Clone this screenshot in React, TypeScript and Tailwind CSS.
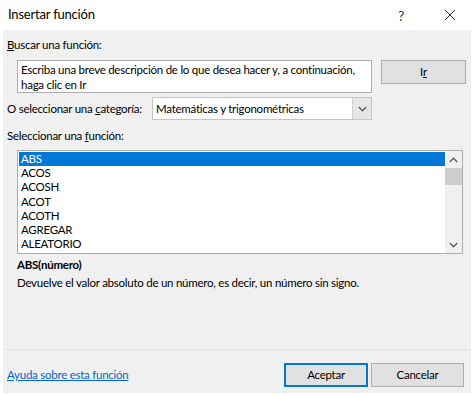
import React from "react";

const items = ["ABS", "ACOS", "ACOSH", "ACOT", "ACOTH", "AGREGAR", "ALEATORIO"];

function Chevron({ dir }: { dir: "up" | "down" }) {
  return (
    <svg width="9" height="6" viewBox="0 0 9 6" className="block">
      <path
        d={dir === "up" ? "M0.8 5 L4.5 1.3 L8.2 5" : "M0.8 1 L4.5 4.7 L8.2 1"}
        fill="none"
        stroke="#606060"
        strokeWidth="1.4"
      />
    </svg>
  );
}

export default function App() {
  return (
    <div
      className="w-[474px] h-[396px] bg-white flex flex-col text-[11.5px] tracking-[-0.25px] text-black"
      style={{ fontFamily: "Lato, 'Noto Sans', sans-serif" }}
    >
      <div className="h-[30px] flex items-center pl-[8px] shrink-0">
        <span className="text-[13px] tracking-[-0.2px]">Insertar función</span>
        <span className="ml-auto text-[14px] text-[#333] mr-[40px]">?</span>
        <svg width="12" height="12" viewBox="0 0 12 12" className="mr-[18px]">
          <path d="M1 1 L11 11 M11 1 L1 11" stroke="#333" strokeWidth="1" />
        </svg>
      </div>
      <div className="flex-1 mx-[3px] mb-[3px] bg-[#f0f0f0] flex flex-col">
        <div className="pl-[4px] pt-[8px] leading-[14px]">
          <u>B</u>uscar una función:
        </div>
        <div className="flex items-start mt-[8px] pl-[14px]">
          <div className="w-[355px] h-[33px] bg-white border border-[#adadad] px-[3px] pt-[1px] leading-[15px]">
            Escriba una breve descripción de lo que desea hacer y, a continuación, haga clic en Ir
          </div>
          <div className="ml-[9px] w-[85px] h-[24px] bg-[#e1e1e1] border border-[#adadad] flex items-center justify-center">
            <span>
              I<u>r</u>
            </span>
          </div>
        </div>
        <div className="flex items-center mt-[4px] pl-[4px]">
          <span className="w-[145px] whitespace-nowrap">
            O seleccionar una <u>c</u>ategoría:
          </span>
          <div className="w-[220px] h-[23px] bg-white border border-[#c4c4c4] flex items-center">
            <span className="pl-[3px] flex-1 whitespace-nowrap">Matemáticas y trigonométricas</span>
            <div className="w-[19px] h-full bg-[#e6e6e6] border-l border-[#d0d0d0] flex items-center justify-center">
              <Chevron dir="down" />
            </div>
          </div>
        </div>
        <div className="pl-[4px] mt-[9px] leading-[14px]">
          Seleccionar una <u>f</u>unción:
        </div>
        <div className="ml-[14px] mr-[8px] mt-[7px] h-[104px] bg-white border border-[#adadad] flex">
          <div className="flex-1 pl-[1px] pt-[1px]">
            {items.map((it, i) => (
              <div
                key={it}
                className={
                  "h-[14.2px] leading-[14.2px] pl-[2px] " +
                  (i === 0 ? "bg-[#0078d7] text-white" : "")
                }
              >
                {it}
              </div>
            ))}
          </div>
          <div className="w-[17px] bg-[#f0f0f0] flex flex-col items-center">
            <div className="h-[17px] flex items-center justify-center">
              <Chevron dir="up" />
            </div>
            <div className="w-[17px] h-[17px] bg-[#cdcdcd]" />
            <div className="flex-1" />
            <div className="h-[17px] flex items-center justify-center">
              <Chevron dir="down" />
            </div>
          </div>
        </div>
        <div className="pl-[14px] mt-[4px] leading-[14px] font-bold">ABS(número)</div>
        <div className="pl-[14px] mt-[4px] leading-[14px]">
          Devuelve el valor absoluto de un número, es decir, un número sin signo.
        </div>
        <div className="flex-1" />
        <div className="border-t border-[#e3e3e3] flex items-center pt-[13px] pb-[6px]">
          <a className="pl-[4px] text-[#0066cc] underline">Ayuda sobre esta función</a>
          <div className="ml-auto w-[84px] h-[24px] bg-[#e1e1e1] border-2 border-[#0078d7] flex items-center justify-center">
            Aceptar
          </div>
          <div className="ml-[3px] mr-[7px] w-[93px] h-[24px] bg-[#e1e1e1] border border-[#adadad] flex items-center justify-center">
            Cancelar
          </div>
        </div>
      </div>
    </div>
  );
}
